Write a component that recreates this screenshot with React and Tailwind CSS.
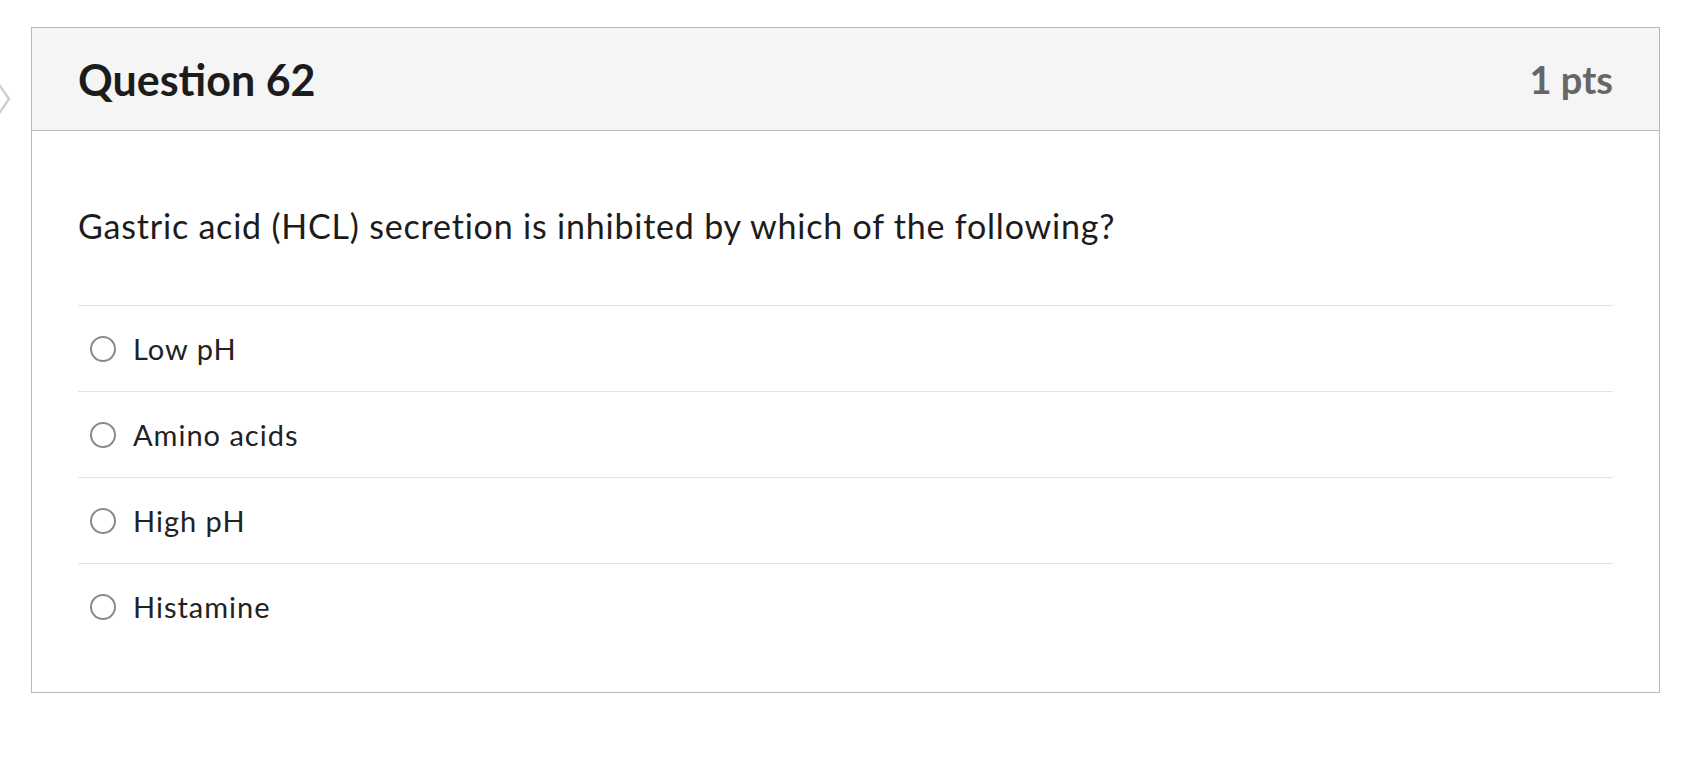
const QUESTION = {
  number: 62,
  points: 1,
  text: 'Gastric acid (HCL) secretion is inhibited by which of the following?',
  answers: ['Low pH', 'Amino acids', 'High pH', 'Histamine'],
};

const App = () => {
  return (
    <div className="min-h-[758px] bg-white pt-[27px] flex items-start font-['Lato',sans-serif]">
      <div className="w-[31px] h-[120px] relative">
        <svg className="absolute left-[-6px] top-[52px]" width="18" height="40" viewBox="0 0 18 40" fill="none">
          <path d="M4 4 L15 20 L4 36" stroke="#cfcfcf" strokeWidth="2.5" strokeLinejoin="round" />
        </svg>
      </div>

      <div className="w-[1629px] border border-[#b9b9b9]">
        <div className="h-[103px] flex items-center justify-between px-[46px] bg-[#f5f5f5] border-b border-[#b9b9b9]">
          <h2 className="text-[43px] font-bold text-[#1c1c1c] leading-none">Question {QUESTION.number}</h2>
          <span className="text-[38px] font-bold text-[#666666] leading-none">{QUESTION.points} pts</span>
        </div>

        <div className="px-[46px] pt-[72px] pb-[43px]">
          <p className="text-[34px] tracking-[0.8px] leading-[45px] text-[#1c1c1c] mb-[57px]">{QUESTION.text}</p>

          <div>
            {QUESTION.answers.map((a) => (
              <label key={a} className="h-[86px] flex items-center border-t border-[#e3e3e3] cursor-pointer">
                <span className="ml-[12px] w-[26px] h-[26px] rounded-full border-2 border-[#8a8a8a] bg-white"></span>
                <span className="ml-[17px] text-[29px] tracking-[1px] text-[#222222]">{a}</span>
              </label>
            ))}
          </div>
        </div>
      </div>
    </div>
  );
};

export default App;
